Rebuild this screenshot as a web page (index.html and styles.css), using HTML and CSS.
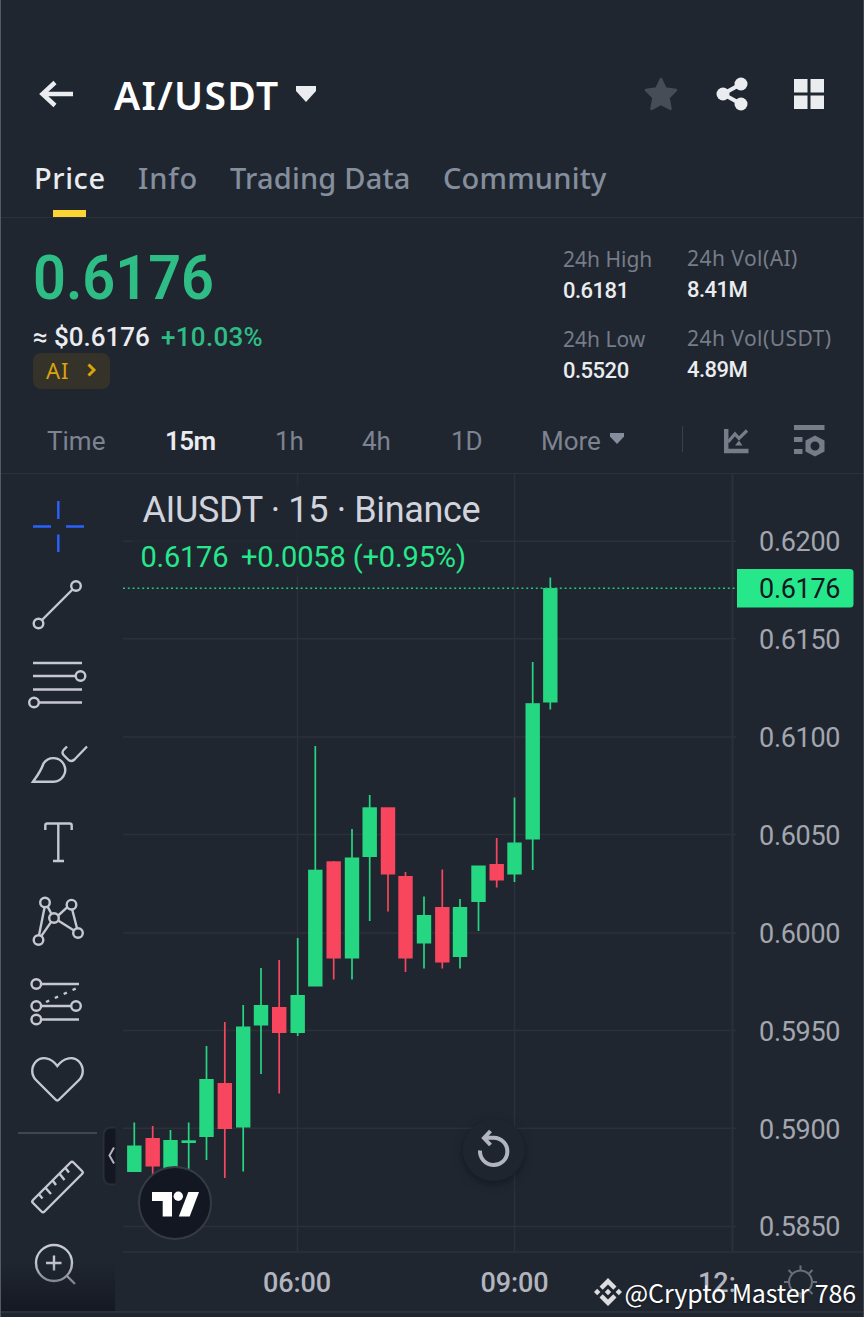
FILE: index.html
```html
<!DOCTYPE html>
<html lang="en">
<head>
  <meta charset="utf-8">
  <title>AI/USDT</title>
  <link rel="stylesheet" href="styles.css">
</head>
<body>
<div class="app">
  <div class="header">
    <svg class="back" width="36" height="30" viewBox="0 0 36 30" fill="none" stroke="#eaecef" stroke-width="4.5"><path d="M35 15H5M17 3.500L4.500 15L17 26.500"/></svg>
    <h1 class="pair">AI/USDT</h1>
    <svg class="caret" width="22" height="18" viewBox="0 0 22 18"><path d="M1 1H21V6L11 17L1 6Z" fill="#eaecef"/></svg>
    <div class="actions">
      <svg width="34" height="36" viewBox="0 0 34 36"><path d="M17 3L21.500 12.500L32 14L24.500 21.500L26.500 33L17 28L7.500 33L9.500 21.500L2 14L12.500 12.500Z" fill="#474d57" stroke="#474d57" stroke-width="2.500" stroke-linejoin="round"/></svg>
      <svg width="34" height="36" viewBox="0 0 34 36" fill="#eaecef"><path d="M26 8L8 18L26 28" fill="none" stroke="#eaecef" stroke-width="4"/><circle cx="26" cy="8" r="6.500"/><circle cx="8" cy="18" r="6.500"/><circle cx="26" cy="28" r="6.500"/></svg>
      <svg width="32" height="32" viewBox="0 0 32 32" fill="#eaecef"><path d="M1 1H14.500V14.500H1ZM17.500 1H31V14.500H17.500ZM1 17.500H14.500V31H1ZM17.500 17.500H31V31H17.500Z"/></svg>
    </div>
  </div>

  <div class="tabs">
    <div class="tab active">Price</div>
    <div class="tab info">Info</div>
    <div class="tab trading">Trading Data</div>
    <div class="tab community">Community</div>
  </div>

  <div class="summary">
    <div class="price-box">
      <div class="price">0.6176</div>
      <div class="sub"><span class="approx">≈</span><span class="usd">$0.6176</span><span class="change">+10.03%</span></div>
      <div class="tag">AI
        <svg width="10" height="14" viewBox="0 0 10 14"><path d="M1.500 1.500L7 7L1.500 12.500" fill="none" stroke="#d9a30a" stroke-width="3"/></svg>
      </div>
    </div>
    <div class="stats">
      <div class="stat"><div class="label">24h High</div><div class="value">0.6181</div></div>
      <div class="stat up"><div class="label wide">24h Vol(AI)</div><div class="value">8.41M</div></div>
      <div class="stat"><div class="label">24h Low</div><div class="value">0.5520</div></div>
      <div class="stat up"><div class="label wide">24h Vol(USDT)</div><div class="value">4.89M</div></div>
    </div>
  </div>

  <div class="intervals">
    <span>Time</span>
    <span class="active">15m</span>
    <span>1h</span>
    <span>4h</span>
    <span>1D</span>
    <span class="more">More <svg width="14" height="11" viewBox="0 0 14 11"><path d="M0 0H14V3.500L7 11L0 3.500Z" fill="#848e9c"/></svg></span>
    <i class="divider"></i>
    <svg width="25" height="26" viewBox="0 0 25 26" fill="none" stroke="#767c88"><path d="M2.200 1V23H24.500" stroke-width="4.500"/><path d="M4 14L11 6L15 10.500L23 2.500" stroke-width="3.200"/><path d="M11 17.500L15 12.500L18.500 17.500Z" fill="#767c88" stroke="none"/></svg>
    <svg width="31" height="33" viewBox="0 0 31 33" fill="#767c88"><path d="M0 1H30.500V6H0ZM0 13H8.500V18H0ZM0 25H8.500V30H0Z"/><path fill-rule="evenodd" d="M21 11.500L30.500 16.500V27.500L21 32.500L11.500 27.500V16.500ZM21 17.500A4.500 4.500 0 1 0 21 26.500A4.500 4.500 0 1 0 21 17.500Z"/></svg>
  </div>

  <div class="workspace">
    <div class="tools">
      <svg class="tool cross" viewBox="0 0 115 79"><path d="M58.300 14V32M58.300 47.500V65M33 39.500H51M66 39.500H84"/></svg>
      <svg class="tool" viewBox="0 0 115 79"><path d="M42 54L72.500 23.500"/><circle cx="76" cy="20" r="4.800"/><circle cx="38.500" cy="57.500" r="4.800"/></svg>
      <svg class="tool" viewBox="0 0 115 79"><path d="M33 18H82M33 31H76M33 44.500H82M39 57.500H82"/><circle cx="80.500" cy="31" r="4.800"/><circle cx="34" cy="57.500" r="4.800"/></svg>
      <svg class="tool" viewBox="0 0 115 79"><path d="M33 57.700H53A11.800 11.800 0 1 0 43.500 39.500C40.500 48 37 52 33 57.700ZM67 22.500L64 25.500Q61 28.500 64 31.500L68 35.500Q71 38.500 74.500 35.500L87 22.500"/></svg>
      <svg class="tool" viewBox="0 0 115 79"><path d="M45.300 27V22.500Q45.300 20.500 47.300 20.500H69.700Q71.700 20.500 71.700 22.500V27M58.300 20.500V58M53 58H64"/></svg>
      <svg class="tool" viewBox="0 0 115 79"><path d="M44.600 25.300L39 53.200M47.600 24.600L51.500 32M58.200 33.500L67.400 25.200M72.200 27.500L77 46.200M58.100 38.500L74 48.500M51.200 39.900L41.300 54.100"/><circle cx="45" cy="20.500" r="4.800"/><circle cx="71.500" cy="22.700" r="4.800"/><circle cx="54" cy="36" r="4.800"/><circle cx="78" cy="51" r="4.800"/><circle cx="38.500" cy="58" r="4.800"/></svg>
      <svg class="tool" viewBox="0 0 115 79"><path d="M41 23H79M41 45H71M41 58.500H79"/><path d="M46 41L77 27" stroke-dasharray="3.500 6.200"/><circle cx="36.300" cy="23" r="4.800"/><circle cx="36.300" cy="45" r="4.800"/><circle cx="76" cy="45" r="4.800"/><circle cx="36.300" cy="58.500" r="4.800"/></svg>
      <svg class="tool" viewBox="0 0 115 79"><path d="M57.300 26C51 17 41 16 36 21.500C31 27 31 35 36 40L55.500 59.500Q57.300 61.500 59.100 59.500L79 40C84 35 84 27 79 21.500C74 16 64 17 57.300 26Z"/></svg>
      <div class="tool-line"></div>
      <svg class="tool" viewBox="0 0 115 79"><path d="M70.500 15.500Q72 14 73.500 15.500L82 24Q83.500 25.500 82 27L44.500 64.500Q43 66 41.500 64.500L33 56Q31.500 54.500 33 53ZM39 47.300L42.500 51.500M45 40.300L51 47M52.300 33L56 38M59 26L64.500 33M65 20.500L69 25.500"/></svg>
      <svg class="tool" viewBox="0 0 115 79"><circle cx="54" cy="37" r="18"/><path d="M46 37H61.500M54 29.500V44.500M67 50L75 58"/></svg>
      <div class="fade"></div>
    </div>

    <svg class="chart" viewBox="115 474 748 837">
      <g id="grid" stroke="#2b303b" stroke-width="1.500">
        <path d="M297.500 474V1252M514.500 474V1252" />
        <path d="M732.500 474V1252" stroke-width="2"/>
        <path d="M123 541.200H736M123 638.700H736M123 737H736M123 834.500H736M123 933H736M123 1030.500H736M123 1128.200H736M123 1226.500H736M123 1252H863"/>
      </g>
      <g id="candles"></g>
      <path d="M123 588.300H736" stroke="#24c776" stroke-width="1.600" stroke-dasharray="2 2.800"/>

      <rect x="132" y="483" width="348" height="94" fill="#202630" opacity=".7"/>
      <text class="symbol" x="142.500" y="521.500" textLength="338">AIUSDT · 15 · Binance</text>
      <text class="quote" x="140.500" y="566.500" textLength="88">0.6176</text>
      <text class="quote" x="241" y="566.500" textLength="225">+0.0058 (+0.95%)</text>

      <g class="axis">
        <text x="759" y="550.700" textLength="81.500">0.6200</text>
        <text x="759" y="648.700" textLength="81.500">0.6150</text>
        <text x="759" y="746.500" textLength="81.500">0.6100</text>
        <text x="759" y="844.500" textLength="81.500">0.6050</text>
        <text x="759" y="942.500" textLength="81.500">0.6000</text>
        <text x="759" y="1040.500" textLength="81.500">0.5950</text>
        <text x="759" y="1138.500" textLength="81.500">0.5900</text>
        <text x="759" y="1236" textLength="81.500">0.5850</text>
      </g>
      <path d="M737 569H850Q853.500 569 853.500 572.500V604Q853.500 607.500 850 607.500H737Z" fill="#26e88a"/>
      <g class="axis last"><text x="759" y="598" textLength="81.500">0.6176</text></g>

      <g class="time">
        <text x="263" y="1292" textLength="68">06:00</text>
        <text x="480.500" y="1292" textLength="68">09:00</text>
        <text x="698" y="1292">12:</text>
      </g>
      <g fill="none" stroke="#6a6e78" stroke-width="2"><circle cx="800.500" cy="1282" r="11.500"/><path d="M800.500 1270V1265.500M800.500 1294V1298.500M788.500 1282H784M812.500 1282H817M792 1273.500L788.500 1270M809 1273.500L812.500 1270M792 1290.500L788.500 1294M809 1290.500L812.500 1294"/></g>

      <circle cx="175" cy="1203" r="36" fill="#131722" stroke="#363a45" stroke-width="2"/>
      <g fill="#fff"><path d="M152 1192H172V1216.500H162.700V1201H152Z"/><circle cx="178.300" cy="1196.200" r="4.700"/><path d="M188.300 1192H199L189.700 1216.500H178.800Z"/></g>

      <circle class="reset" cx="493.700" cy="1150" r="31"/>
      <path d="M480 1150.500A13.700 13.700 0 1 0 493.700 1137.700H485M490.500 1131L484 1138L490.500 1145" fill="none" stroke="#b2b5be" stroke-width="4"/>
    </svg>

    <svg class="collapse" width="14" height="60" viewBox="0 0 14 60"><path d="M13.500 1.500H9Q1.500 1.500 1.500 10V50Q1.500 58.500 9 58.500H13.500" fill="#131722" stroke="#292e39" stroke-width="2"/><path d="M12 21.500L7.500 29.500L12 37.500" fill="none" stroke="#b2b5be" stroke-width="2"/></svg>
    <div class="watermark">
      <svg width="28" height="28" viewBox="0 0 28 28" fill="#dcdddf"><path d="M14 0L22.500 8.500L19.300 11.700L14 6.400L8.700 11.700L5.500 8.500ZM14 28L22.500 19.500L19.300 16.300L14 21.600L8.700 16.300L5.500 19.500ZM14 10.800L17.200 14L14 17.200L10.800 14ZM3.200 10.800L6.400 14L3.200 17.200L0 14ZM24.800 10.800L28 14L24.800 17.200L21.600 14Z"/></svg>
      <span>@Crypto Master 786</span>
    </div>
  </div>
</div>
<script src="chart.js"></script>
</body>
</html>
```

FILE: styles.css
```css
* {
  box-sizing: border-box;
}
body {
  margin: 0;
  background: #202630;
  font-family: "Noto Sans", sans-serif;
  color: #eaecef;
}
.app {
  width: 864px;
  height: 1317px;
  overflow: hidden;
  border-left: 1px solid #555962;
  border-right: 1px solid #42464f;
}
svg {
  display: block;
  flex: none;
}
.header {
  display: flex;
  align-items: center;
  height: 134px;
  padding: 54px 38px 0 37px;
}
.pair {
  width: 164px;
  margin: 2px 17px 0 40px;
  font-size: 39px;
  font-weight: 600;
  line-height: 78px;
  letter-spacing: 1.3px;
  white-space: nowrap;
  color: #fff;
}
.actions {
  display: flex;
  align-items: center;
  margin-left: auto;
}
.actions svg + svg {
  margin-left: 37px;
}
.actions svg + svg + svg {
  margin-left: 44px;
}
.tabs {
  display: flex;
  height: 84px;
  padding: 24px 0 0 33px;
  border-bottom: 1px solid #2b303b;
  font-size: 29px;
  font-weight: 500;
  line-height: 40px;
  letter-spacing: .2px;
  white-space: nowrap;
  color: #848e9c;
}
.tab.active {
  width: 104px;
  letter-spacing: .6px;
  color: #eaecef;
}
.tab.active::after {
  content: "";
  display: block;
  width: 33px;
  height: 7px;
  margin: 12px 0 0 19px;
  background: #fcd535;
}
.tab.info {
  width: 92px;
  letter-spacing: .9px;
}
.tab.trading {
  width: 213px;
}
.summary {
  display: flex;
  height: 192px;
  padding: 25px 0 0 32px;
}
.price-box {
  width: 530px;
  padding-top: 5px;
  font-family: Roboto, sans-serif;
}
.price {
  font-size: 61px;
  font-weight: 600;
  line-height: 60px;
  color: #2ebd85;
  transform: scaleX(.945);
  transform-origin: left;
}
.sub {
  display: flex;
  margin-top: 14px;
  font-size: 26px;
  font-weight: 500;
  line-height: 30px;
}
.approx {
  width: 21px;
}
.usd {
  width: 107px;
}
.change {
  letter-spacing: .3px;
  color: #2ebd85;
}
.tag {
  display: flex;
  align-items: center;
  justify-content: space-between;
  width: 77px;
  height: 36px;
  margin-top: 1px;
  padding: 0 13px 2px;
  border-radius: 8px;
  background: #35322a;
  font-family: "Noto Sans", sans-serif;
  font-size: 22px;
  letter-spacing: 1px;
  color: #d9a30a;
}
.stats {
  display: grid;
  grid-template-columns: 124px 160px;
  grid-auto-rows: 63px;
  row-gap: 17px;
  padding-top: 1px;
  font-size: 21px;
  white-space: nowrap;
}
.stat.up {
  margin-top: -1px;
}
.label {
  line-height: 31px;
  color: #767c88;
}
.label.wide {
  letter-spacing: .45px;
}
.value {
  font-family: Roboto, sans-serif;
  font-size: 22px;
  font-weight: 500;
  line-height: 32px;
  letter-spacing: -.5px;
}
.intervals {
  display: grid;
  grid-template-columns: 118px 110px 87px 89px 90px 141px 42px 70px 31px;
  align-items: center;
  height: 64px;
  padding: 0 0 2px 46px;
  border-bottom: 1px solid #2b303b;
  font-family: Roboto, sans-serif;
  font-size: 26px;
  color: #7d8390;
}
.intervals .active {
  font-weight: 600;
  letter-spacing: -.6px;
  color: #eaecef;
}
.more {
  display: flex;
  align-items: center;
  gap: 9px;
}
.more svg {
  margin-top: -4px;
}
.divider {
  width: 1px;
  height: 26px;
  margin-top: -4px;
  background: #3a404b;
}
.workspace {
  position: relative;
  display: flex;
  height: 839px;
  border-bottom: 2px solid #2b303b;
}
.tools {
  position: relative;
  width: 114px;
  padding-top: 13px;
}
.tool {
  width: 115px;
  height: 79px;
  margin-left: -1px;
  fill: none;
  stroke: #c5c8d0;
  stroke-width: 2.4;
}
.tool.cross {
  stroke: #2962ff;
}
.tool-line {
  width: 79px;
  height: 2px;
  margin: 13px 0 13px 17px;
  background: #434651;
}
.fade {
  position: absolute;
  left: 0;
  bottom: 0;
  width: 114px;
  height: 50px;
  background: linear-gradient(rgba(19, 23, 34, 0), rgba(19, 23, 34, .9));
}
.chart {
  width: 748px;
  height: 837px;
  font-family: Roboto, sans-serif;
}
.symbol {
  font-size: 36px;
  fill: #d1d4dc;
}
.quote {
  font-size: 29px;
  fill: #26e88a;
}
.axis {
  font-size: 27px;
  fill: #a3a6af;
}
.axis.last {
  fill: #131722;
}
.time {
  font-size: 27px;
  font-weight: 500;
  fill: #b2b5be;
}
.up-bar {
  fill: #26d782;
  stroke: #26d782;
}
.down-bar {
  fill: #f7465d;
  stroke: #f7465d;
}
.reset {
  fill: #1f252f;
  filter: drop-shadow(0 3px 4px rgba(10, 12, 20, .55));
}
.collapse {
  position: absolute;
  left: 101px;
  top: 652px;
}
.watermark {
  position: absolute;
  right: 7px;
  bottom: 1px;
  display: flex;
  align-items: center;
  gap: 3px;
  font-family: "Noto Sans CJK SC", sans-serif;
  font-size: 25px;
  line-height: 36px;
  letter-spacing: -.1px;
  white-space: nowrap;
  color: #fff;
  text-shadow: 0 1px 2px rgba(0, 0, 0, .5);
}
```

FILE: chart.js
```js
// x, body top, body bottom, wick top, wick bottom, direction
var bars = [
  [134.3, 1145.5, 1172, 1122.5, 1172, 1],
  [152.7, 1138, 1166.5, 1126, 1176, 0],
  [170.5, 1140, 1180, 1130, 1180, 1],
  [188.7, 1140.3, 1143, 1122.5, 1180, 1],
  [206.5, 1079, 1137, 1046, 1160, 1],
  [224.8, 1083, 1129, 1022, 1178, 0],
  [243.2, 1026.5, 1127.5, 1005, 1171.5, 1],
  [261, 1005, 1025.5, 968, 1074, 1],
  [279.2, 1007, 1033, 960, 1093.5, 0],
  [297.7, 995, 1033, 938, 1036, 1],
  [315.3, 869.7, 986.5, 746, 986, 1],
  [333.7, 861.3, 958.5, 861, 979.5, 0],
  [352, 857.5, 958.5, 829, 979.5, 1],
  [369.7, 807.3, 857, 795, 921, 1],
  [388, 807.3, 874.5, 808, 911.5, 0],
  [405.5, 876, 958.5, 872, 972, 0],
  [424, 915, 943.5, 896.5, 968.5, 1],
  [442.3, 907, 962.5, 869.5, 968.5, 0],
  [460, 907, 957, 899, 968.5, 1],
  [478.5, 865.5, 902, 866, 931, 1],
  [496.7, 864, 880.5, 838, 887.5, 0],
  [514.5, 842.5, 874.5, 797.5, 882, 1],
  [532.7, 703.2, 839.5, 662, 870, 1],
  [550.3, 588, 702.5, 577.5, 709.5, 1]
];

var html = '';
bars.forEach(function (b) {
  html += '<g class="' + (b[5] ? 'up-bar' : 'down-bar') + '">' +
    '<rect x="' + (b[0] - 7.2) + '" y="' + b[1] + '" width="14.4" height="' + (b[2] - b[1]) + '" stroke="none"/>' +
    '<path d="M' + b[0] + ' ' + b[3] + 'V' + b[4] + '" stroke-width="1.7"/></g>';
});
document.getElementById('candles').innerHTML = html;
```
